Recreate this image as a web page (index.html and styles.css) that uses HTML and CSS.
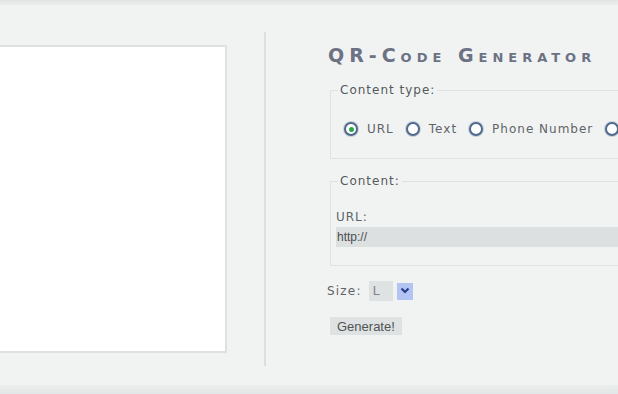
FILE: index.html
```html
<!DOCTYPE html>
<html lang="en">
<head>
  <meta charset="UTF-8" />
  <meta name="viewport" content="width=device-width, initial-scale=1.0"/>
  <title>QR-Code Generator</title>
  <link rel="stylesheet" href="styles.css">
</head>
<body>

<div class="top-strip"></div>

<div class="page">
  <!-- PREVIEW -->
  <div class="preview-col">
    <div class="preview-box"></div>
  </div>

  <div class="divider"></div>

  <!-- FORM -->
  <div class="form-col">
    <h1 class="title">QR-Code Generator</h1>

    <fieldset class="group type-group">
      <legend>Content type:</legend>
      <div class="radios">
        <label class="radio"><span class="dot checked"></span>URL</label>
        <label class="radio"><span class="dot"></span>Text</label>
        <label class="radio"><span class="dot"></span>Phone Number</label>
        <label class="radio"><span class="dot"></span></label>
      </div>
    </fieldset>

    <fieldset class="group content-group">
      <legend>Content:</legend>
      <div class="field-label">URL:</div>
      <div class="text-input">http://</div>
    </fieldset>

    <div class="size-row">
      <span class="size-label">Size:</span>
      <span class="select-box">L</span>
      <span class="select-arrow">
        <svg width="10" height="8" viewBox="0 0 10 8"><path d="M1.5 1.5 L5 5 L8.5 1.5" fill="none" stroke="#2a3f8f" stroke-width="2.2"/></svg>
      </span>
    </div>

    <button class="generate-btn">Generate!</button>
  </div>
</div>

<div class="bottom-strip"></div>

</body>
</html>
```

FILE: styles.css
```css
body {
  margin: 0;
  background: #f1f3f3;
  font-family: "DejaVu Sans", Verdana, sans-serif;
  color: #555a5c;
  overflow: hidden;
  height: 394px;
  position: relative;
}

.top-strip {
  height: 5px;
  background: linear-gradient(#e2e5e5, #eceeee);
}

.bottom-strip {
  position: absolute;
  left: 0;
  right: 0;
  bottom: 0;
  height: 9px;
  background: linear-gradient(#eceeee, #e3e6e6);
}

.page {
  display: flex;
  align-items: flex-start;
}

.preview-col {
  width: 227px;
  padding-top: 40px;
}

.preview-box {
  height: 304px;
  background: #fff;
  border: 2px solid #dfe1e1;
  border-left: none;
}

.divider {
  width: 2px;
  height: 334px;
  margin-top: 27px;
  margin-left: 37px;
  background: #dcdfdf;
}

.form-col {
  flex: 1;
  padding-left: 61px;
  min-width: 0;
}

.title {
  margin: 38px 0 0 1px;
  font-size: 19px;
  line-height: 24px;
  font-weight: bold;
  font-variant: small-caps;
  letter-spacing: 5px;
  color: #6c7284;
  white-space: nowrap;
}

.group {
  margin: 0 -40px 0 3px;
  border: 1px solid #e0e2e2;
  padding: 0 6px;
}

.group legend {
  font-size: 12px;
  line-height: 13px;
  letter-spacing: 1px;
  padding: 0 2px;
  margin-left: 1px;
  color: #55595b;
}

.type-group {
  margin-top: 17px;
  height: 73px;
}

.radios {
  display: flex;
  align-items: center;
  gap: 12px;
  margin: 25px 0 0 7px;
  white-space: nowrap;
}

.radio {
  display: flex;
  align-items: center;
  gap: 9px;
  font-size: 12px;
  line-height: 14px;
  letter-spacing: 1px;
  color: #606466;
}

.dot {
  width: 10px;
  height: 10px;
  border: 2px solid #4f6a8a;
  border-radius: 50%;
  background: #fff;
  position: relative;
  box-shadow: 0 0 0 1px #c6d0dc;
}

.dot.checked::after {
  content: "";
  position: absolute;
  left: 2.5px;
  top: 2.5px;
  width: 5px;
  height: 5px;
  border-radius: 50%;
  background: #2aa845;
}

.content-group {
  margin-top: 16px;
  height: 89px;
}

.field-label {
  margin-top: 23px;
  margin-left: -1px;
  font-size: 12px;
  line-height: 13px;
  letter-spacing: 1px;
  color: #606466;
}

.text-input {
  margin-top: 3px;
  margin-left: -1px;
  height: 20px;
  line-height: 20px;
  padding-left: 1px;
  background: #dde0e0;
  font-family: "Liberation Sans", Arial, sans-serif;
  font-size: 12px;
  color: #4a4d4f;
}

.size-row {
  display: flex;
  align-items: center;
  margin-top: 15px;
}

.size-label {
  font-size: 12px;
  letter-spacing: 1.2px;
  color: #606466;
  margin-right: 7px;
}

.select-box {
  width: 20px;
  height: 20px;
  line-height: 20px;
  padding-left: 4px;
  background: #dfe2e2;
  font-family: "Liberation Sans", Arial, sans-serif;
  font-size: 13px;
  color: #808486;
}

.select-arrow {
  width: 16px;
  height: 17px;
  margin-left: 4px;
  background: #b3c3f2;
  display: flex;
  align-items: center;
  justify-content: center;
}

.generate-btn {
  margin: 16px 0 0 3px;
  padding: 0 7px;
  height: 18px;
  border: none;
  background: #dfe2e2;
  font-family: "Liberation Sans", Arial, sans-serif;
  font-size: 13px;
  color: #505456;
  cursor: pointer;
}
```
